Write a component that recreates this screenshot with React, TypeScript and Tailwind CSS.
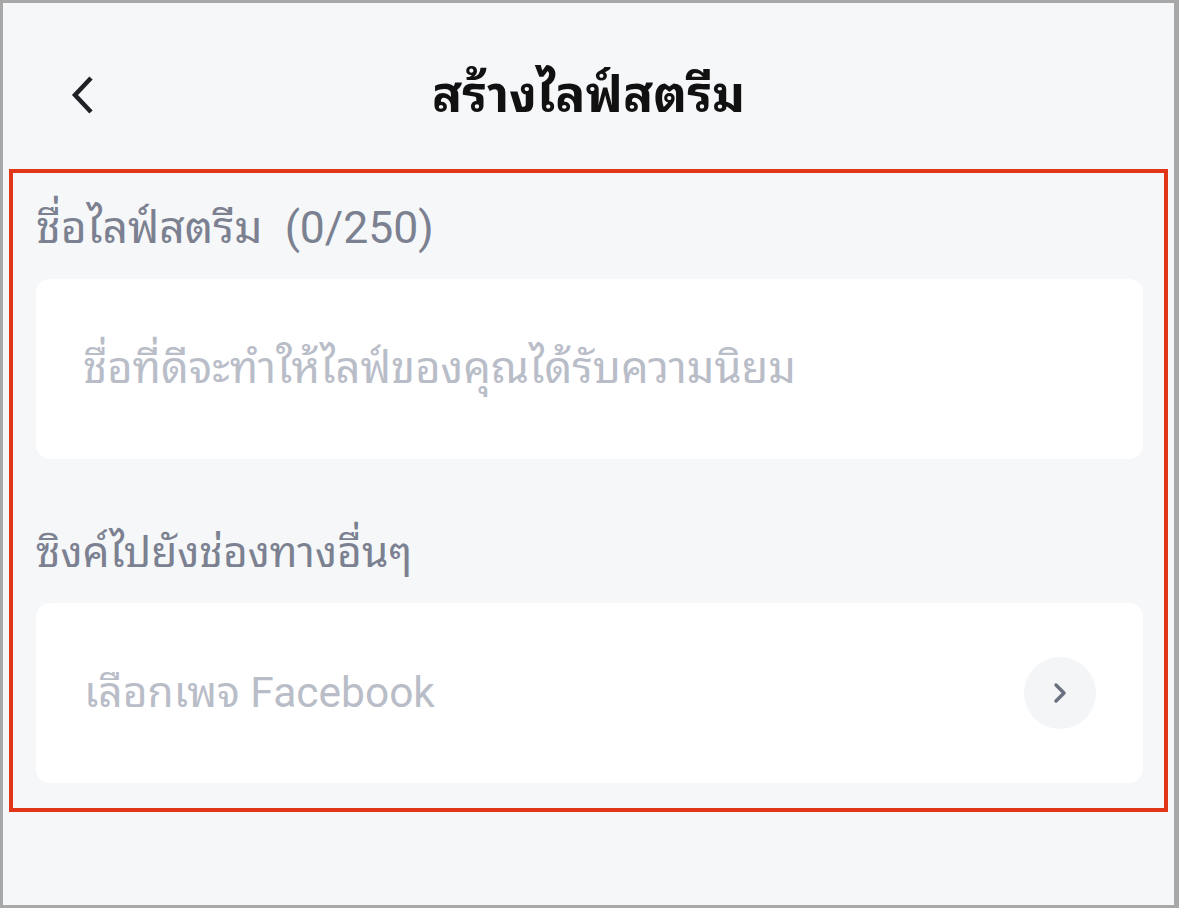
function BackIcon() {
  return (
    <svg width="26" height="40" viewBox="0 0 26 40" fill="none">
      <path d="M22 3 L6 20 L22 37" stroke="#1f2127" strokeWidth="4.5" strokeLinejoin="miter" />
    </svg>
  );
}

function ChevronRight() {
  return (
    <svg width="14" height="22" viewBox="0 0 14 22" fill="none">
      <path d="M3 3 L11 11 L3 19" stroke="#6b7180" strokeWidth="3.5" strokeLinecap="round" strokeLinejoin="round" />
    </svg>
  );
}

export default function App() {
  return (
    <div className="w-[1179px] h-[908px] border-t-[3px] border-l-[3px] border-b-[3px] border-r-[5px] border-[#a8a8a8] bg-[#f6f7f9] flex flex-col font-['Roboto','Noto_Sans_Thai_Looped',sans-serif]">
      {/* header */}
      <div className="h-[166px] flex items-center pl-[66px] pr-[64px] pt-[18px]">
        <BackIcon />
        <h1 className="flex-1 text-center text-[50px] font-bold text-[#111111] leading-none pr-[28px]">สร้างไลฟ์สตรีม</h1>
      </div>

      {/* highlighted form area */}
      <div className="ml-[6px] w-[1159px] h-[643px] border-4 border-[#e2361b] flex flex-col px-[23px] pt-[31px]">
        <div className="h-[48px] flex items-center text-[44.5px] text-[#7b8190]">
          ชื่อไลฟ์สตรีม&nbsp;&nbsp;(0/250)
        </div>
        <div className="mt-[27px] h-[180px] w-[1107px] bg-white rounded-[14px] flex items-center pl-[47px]">
          <span className="text-[43.5px] text-[#b9bdc8]">ชื่อที่ดีจะทำให้ไลฟ์ของคุณได้รับความนิยม</span>
        </div>
        <div className="mt-[70px] h-[48px] flex items-center text-[42.5px] text-[#7b8190]">
          ซิงค์ไปยังช่องทางอื่นๆ
        </div>
        <div className="mt-[26px] h-[180px] w-[1107px] bg-white rounded-[14px] flex items-center pl-[48px] pr-[47px]">
          <span className="flex-1 text-[42.5px] text-[#b9bdc8]">เลือกเพจ Facebook</span>
          <div className="w-[72px] h-[72px] rounded-full bg-[#f4f5f7] flex items-center justify-center">
            <ChevronRight />
          </div>
        </div>
      </div>
    </div>
  );
}
